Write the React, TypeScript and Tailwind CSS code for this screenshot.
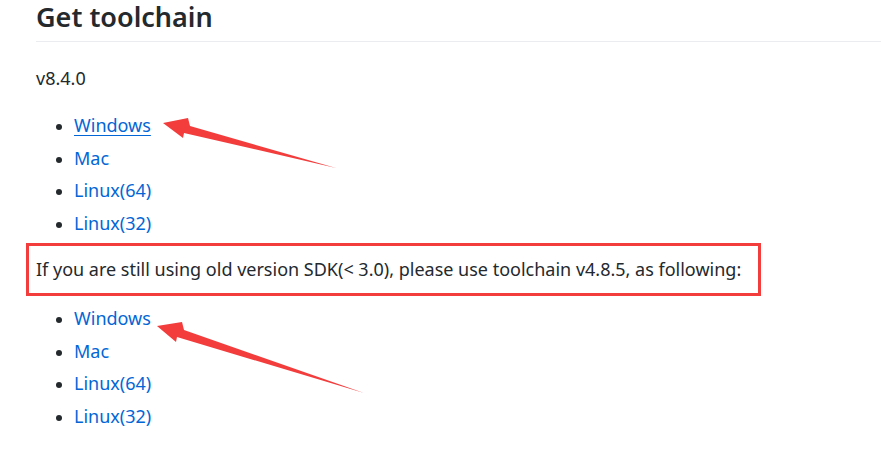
import React from "react";

const links = ["Windows", "Mac", "Linux(64)", "Linux(32)"];

function LinkList({ underlineFirst }: { underlineFirst?: boolean }) {
  return (
    <ul className="list-disc pl-[38px] marker:text-[#24292e] marker:text-[16px]">
      {links.map((l, i) => (
        <li key={l} className="leading-[32.5px]">
          <a
            href="#"
            className={
              "text-[#0366d6] " +
              (underlineFirst && i === 0 ? "underline underline-offset-[3px]" : "no-underline")
            }
          >
            {l}
          </a>
        </li>
      ))}
    </ul>
  );
}

export default function App() {
  return (
    <div
      className="relative w-[881px] h-[450px] overflow-hidden bg-white text-[18px] text-[#24292e]"
      style={{ fontFamily: '"Noto Sans", "Open Sans", sans-serif' }}
    >
      <div className="pl-[36px]">
        {/* --- HEADING --- */}
        <h2 className="text-[27px] font-semibold leading-[34px] pb-[7px] border-b border-[#eaecef]">
          Get toolchain
        </h2>

        <p className="mt-[24px] leading-[24px]">v8.4.0</p>

        <div className="mt-[19px]">
          <LinkList underlineFirst />
        </div>

        {/* --- HIGHLIGHTED NOTE --- */}
        <div className="mt-[4px] ml-[-10px] w-[735px] h-[53px] border-[3px] border-[#f33c3c] pl-[7px] leading-[47px]">
          If you are still using old version SDK(&lt; 3.0), please use toolchain v4.8.5, as following:
        </div>

        <div className="mt-[6px]">
          <LinkList />
        </div>
      </div>

      {/* annotation arrows */}
      <svg className="absolute left-0 top-0 pointer-events-none" width="881" height="450">
        <polygon
          points="163,123 188,118 190,126 336,168 184,133 183,138"
          fill="#f33c3c"
        />
        <polygon
          points="157,326 182,322 184,330 364,393 177,337 176,342"
          fill="#f33c3c"
        />
      </svg>
    </div>
  );
}
